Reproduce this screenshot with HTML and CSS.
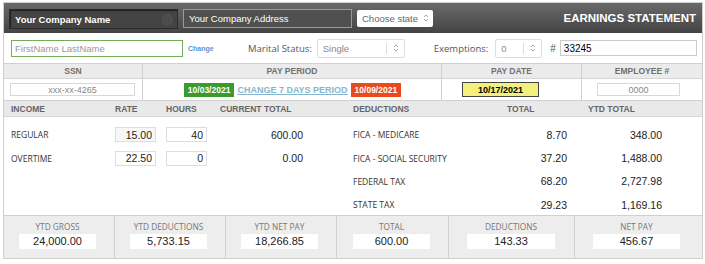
FILE: index.html
```html
<!DOCTYPE html>
<html lang="en">
<head>
  <meta charset="UTF-8" />
  <meta name="viewport" content="width=device-width, initial-scale=1.0" />
  <title>Earnings Statement</title>
  <link rel="stylesheet" href="styles.css">
</head>
<body>
  <div class="statement">

    <div class="top-bar">
      <div class="company-name">
        <input class="dark-input name-input" type="text" value="Your Company Name">
        <span class="autofill"></span>
      </div>
      <input class="dark-input address-input" type="text" value="Your Company Address">
      <div class="select state-select">
        <span>Choose state</span>
        <svg class="updown" width="6" height="10" viewBox="0 0 6 10"><path d="M1 4 L3 2 L5 4 M1 6 L3 8 L5 6" /></svg>
      </div>
      <h1>EARNINGS STATEMENT</h1>
    </div>

    <div class="employee-row">
      <input class="employee-name" type="text" placeholder="FirstName LastName">
      <a class="change-link" href="#">Change</a>
      <span class="row-label marital-label">Marital Status:</span>
      <div class="select light-select marital-select">
        <span>Single</span>
        <span class="sep"></span>
        <svg class="updown" width="6" height="10" viewBox="0 0 6 10"><path d="M1 4 L3 2 L5 4 M1 6 L3 8 L5 6" /></svg>
      </div>
      <span class="row-label exemptions-label">Exemptions:</span>
      <div class="select light-select exemptions-select">
        <span>0</span>
        <span class="sep"></span>
        <svg class="updown" width="6" height="10" viewBox="0 0 6 10"><path d="M1 4 L3 2 L5 4 M1 6 L3 8 L5 6" /></svg>
      </div>
      <span class="hash">#</span>
      <input class="employee-id" type="text" value="33245">
    </div>

    <div class="info-grid">
      <div class="info-head">SSN</div>
      <div class="info-head">PAY PERIOD</div>
      <div class="info-head">PAY DATE</div>
      <div class="info-head">EMPLOYEE #</div>

      <div class="info-cell"><input class="ssn-input" type="text" placeholder="xxx-xx-4265"></div>
      <div class="info-cell period-cell">
        <span class="badge badge-start">10/03/2021</span>
        <a class="period-link" href="#">CHANGE 7 DAYS PERIOD</a>
        <span class="badge badge-end">10/09/2021</span>
      </div>
      <div class="info-cell"><input class="pay-date" type="text" value="10/17/2021"></div>
      <div class="info-cell"><input class="employee-no" type="text" placeholder="0000"></div>
    </div>

    <div class="details">
      <div class="income">
        <div class="line line-head">
          <span>INCOME</span><span>RATE</span><span>HOURS</span><span>CURRENT TOTAL</span>
        </div>
        <div class="lines">
          <div class="line">
            <span class="item">REGULAR</span>
            <span><input class="num-input rate" type="text" value="15.00"></span>
            <span><input class="num-input" type="text" value="40"></span>
            <span class="amount">600.00</span>
          </div>
          <div class="line">
            <span class="item">OVERTIME</span>
            <span><input class="num-input" type="text" value="22.50"></span>
            <span><input class="num-input" type="text" value="0"></span>
            <span class="amount">0.00</span>
          </div>
        </div>
      </div>

      <div class="deductions">
        <div class="line line-head">
          <span>DEDUCTIONS</span><span>TOTAL</span><span>YTD TOTAL</span>
        </div>
        <div class="lines">
          <div class="line">
            <span class="item">FICA - MEDICARE</span><span class="amount">8.70</span><span class="amount ytd">348.00</span>
          </div>
          <div class="line">
            <span class="item">FICA - SOCIAL SECURITY</span><span class="amount">37.20</span><span class="amount ytd">1,488.00</span>
          </div>
          <div class="line">
            <span class="item">FEDERAL TAX</span><span class="amount">68.20</span><span class="amount ytd">2,727.98</span>
          </div>
          <div class="line">
            <span class="item">STATE TAX</span><span class="amount">29.23</span><span class="amount ytd">1,169.16</span>
          </div>
        </div>
      </div>
    </div>

    <div class="summary">
      <div class="sum-cell"><div class="sum-label">YTD GROSS</div><div class="sum-value">24,000.00</div></div>
      <div class="sum-cell"><div class="sum-label">YTD DEDUCTIONS</div><div class="sum-value">5,733.15</div></div>
      <div class="sum-cell"><div class="sum-label">YTD NET PAY</div><div class="sum-value">18,266.85</div></div>
      <div class="sum-cell"><div class="sum-label">TOTAL</div><div class="sum-value">600.00</div></div>
      <div class="sum-cell"><div class="sum-label">DEDUCTIONS</div><div class="sum-value">143.33</div></div>
      <div class="sum-cell"><div class="sum-label">NET PAY</div><div class="sum-value">456.67</div></div>
    </div>

  </div>
</body>
</html>
```

FILE: styles.css
```css
* {
  box-sizing: border-box;
  margin: 0;
  padding: 0;
}

body {
  font-family: "Liberation Sans", Arial, sans-serif;
  background: #fff;
  padding: 2px 0 0 3px;
  color: #222;
}

input {
  font-family: "Liberation Sans", Arial, sans-serif;
  outline: none;
}

.statement {
  width: 700px;
  border: 1px solid #cfcfcf;
}

/* top dark bar */
.top-bar {
  height: 30px;
  display: flex;
  align-items: center;
  padding: 0 6px 0 5px;
  background: linear-gradient(#6a6a6a, #434343);
  white-space: nowrap;
}

.company-name {
  position: relative;
  width: 169px;
  height: 20px;
  margin-top: 1px;
}

.dark-input {
  height: 20px;
  color: #fff;
  font-size: 9.5px;
  padding: 0 5px;
}

.name-input {
  width: 100%;
  font-weight: bold;
  background: #444;
  border: 1px solid #2a2a2a;
  box-shadow: inset 1px 1px 1px #222;
}

.autofill {
  position: absolute;
  right: 5px;
  top: 5px;
  width: 11px;
  height: 11px;
  border-radius: 50%;
  background: #4c4c4c;
  border: 1px solid #555;
}

.address-input {
  width: 169px;
  height: 19px;
  margin-left: 5px;
  background: #505050;
  border: 1px solid #9a9a9a;
}

.select {
  display: flex;
  align-items: center;
  background: #fff;
  font-size: 9.5px;
  color: #666;
  white-space: nowrap;
}

.updown path {
  fill: none;
  stroke: #aaa;
  stroke-width: 1;
}

.state-select {
  width: 76px;
  height: 17px;
  margin-left: 5px;
  padding: 0 4px 0 5px;
  border-radius: 2px;
  justify-content: space-between;
}

.top-bar h1 {
  margin-left: auto;
  color: #fff;
  font-size: 11.5px;
  font-weight: bold;
  margin-top: -1px;
}

/* employee row */
.employee-row {
  height: 31px;
  display: flex;
  align-items: center;
  padding-left: 7px;
  border-bottom: 1px solid #d0d0d0;
  white-space: nowrap;
}

.employee-name {
  width: 172px;
  height: 17px;
  border: 1px solid #74ad5a;
  font-size: 9.5px;
  padding: 0 3px;
  color: #333;
}

.employee-name::placeholder {
  color: #999;
}

.change-link {
  margin-left: 5px;
  width: 28px;
  font-size: 7px;
  font-weight: bold;
  color: #5b95c8;
  text-decoration: none;
}

.row-label {
  font-family: "Open Sans", sans-serif;
  font-size: 9.5px;
  color: #555;
}

.marital-label {
  margin-left: 32px;
}

.light-select {
  height: 19px;
  border: 1px solid #ddd;
  border-radius: 2px;
  padding: 0 5px;
  color: #888;
}

.light-select .sep {
  width: 1px;
  height: 11px;
  background: #ddd;
  margin: 0 6px 0 auto;
}

.marital-select {
  width: 88px;
  margin-left: 5px;
}

.exemptions-label {
  margin-left: 29px;
}

.exemptions-select {
  width: 47px;
  margin-left: 7px;
}

.hash {
  margin-left: 8px;
  font-size: 10px;
  color: #555;
}

.employee-id {
  width: 137px;
  height: 16px;
  margin-left: 4px;
  border: 1px solid #ccc;
  font-size: 10px;
  padding: 0 3px;
}

/* info table */
.info-grid {
  display: grid;
  grid-template-columns: 139px 299px 140px 120px;
  grid-template-rows: 15px 21px;
  border-bottom: 1px solid #d0d0d0;
}

.info-head {
  background: #ebebeb;
  font-size: 8.5px;
  font-weight: bold;
  color: #707070;
  text-align: center;
  line-height: 15px;
  border-bottom: 1px solid #d6d6d6;
}

.info-head, .info-cell {
  border-right: 1px solid #d0d0d0;
}

.info-head:nth-child(4), .info-cell:last-child {
  border-right: none;
}

.info-cell {
  display: flex;
  align-items: center;
}

.ssn-input {
  width: 125px;
  height: 13px;
  margin-left: 6px;
  border: 1px solid #d8d8d8;
  font-size: 9px;
  text-align: center;
}

.ssn-input::placeholder, .employee-no::placeholder {
  color: #888;
}

.period-cell {
  justify-content: center;
  gap: 3px;
  padding-left: 1px;
}

.badge {
  color: #fff;
  font-size: 8.5px;
  font-weight: bold;
  padding: 2px 4px;
}

.badge-start {
  background: #3b9a2c;
}

.badge-end {
  background: #ea4b1d;
}

.period-link {
  color: #86b5cf;
  font-size: 9px;
  font-weight: bold;
  text-decoration: underline;
}

.pay-date {
  width: 77px;
  height: 15px;
  margin-left: 20px;
  background: #f4f07d;
  border: 1px solid #444;
  font-size: 9px;
  font-weight: bold;
  text-align: center;
}

.employee-no {
  width: 83px;
  height: 13px;
  margin-left: 15px;
  border: 1px solid #d8d8d8;
  font-size: 9px;
  text-align: center;
}

/* income / deductions */
.details {
  display: flex;
  height: 114px;
}

.line {
  display: grid;
  align-items: center;
  height: 23.4px;
}

.line-head {
  height: 16px;
  background: #e9e9e9;
  font-size: 8.5px;
  font-weight: bold;
  color: #666;
  border-bottom: 1px solid #d6d6d6;
}

.lines {
  padding-top: 6px;
}

.income {
  width: 333px;
}

.income .line {
  grid-template-columns: 104px 51px 54px 83px;
  padding-left: 7px;
}

.deductions {
  flex: 1;
}

.deductions .line {
  grid-template-columns: 154px 81px 1fr;
  padding-left: 16px;
}

.item {
  font-family: "Open Sans", sans-serif;
  font-size: 8.5px;
  color: #333;
}

.amount {
  font-size: 10.5px;
  text-align: right;
}

.deductions .amount {
  padding-right: 21px;
}

.deductions .ytd {
  padding-right: 40px;
}

.num-input {
  display: block;
  width: 41px;
  height: 15px;
  border: 1px solid #ddd;
  font-size: 10.5px;
  text-align: right;
  padding: 0 3px;
  color: #222;
}

.rate {
  background: #f7f7f7;
}

/* summary footer */
.summary {
  display: flex;
  height: 43px;
  background: #ededed;
  border-top: 1px solid #d0d0d0;
}

.sum-cell {
  width: 111px;
  padding: 5px 18px 0 15px;
  border-right: 1px solid #d0d0d0;
}

.sum-cell:nth-child(4) {
  width: 112px;
  padding-left: 16px;
}

.sum-cell:nth-child(5) {
  width: 126px;
  padding: 5px 19px 0 18px;
}

.sum-cell:nth-child(6) {
  width: 127px;
  padding: 5px 22px 0 18px;
  border-right: none;
}

.sum-label {
  font-family: "Open Sans", sans-serif;
  font-size: 8.3px;
  color: #777;
  text-align: center;
  height: 12px;
}

.sum-value {
  margin-top: 1px;
  background: #fff;
  height: 15px;
  font-size: 11px;
  text-align: center;
  line-height: 15px;
}
```
